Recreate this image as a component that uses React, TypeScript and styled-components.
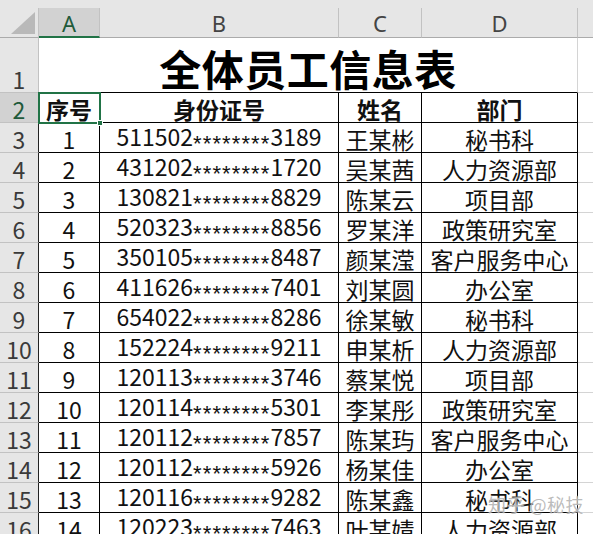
import React from "react";
import styled, { createGlobalStyle } from "styled-components";

const Global = createGlobalStyle`
  html, body { margin: 0; padding: 0; background: #fff; }
  body { font-family: "Noto Sans CJK SC", "Noto Sans", sans-serif; }
`;

const GREEN = "#217346";
const GRID = "#d4d4d4";
const HEAD_BG = "#e6e6e6";
const HEAD_SEL = "#d2d2d2";
const HEAD_LINE = "#c2c2c2";

const Viewport = styled.div`
  position: relative;
  width: 593px;
  height: 534px;
  overflow: hidden;
  background: #fff;
`;

const TopBand = styled.div`
  height: 8px;
  background: ${HEAD_BG};
`;

const Sheet = styled.div`
  display: grid;
  grid-template-columns: 39px 61px 239px 83px 156px 15px;
  grid-template-rows: 30px 55px repeat(15, 30px);
`;

const Corner = styled.div`
  background: ${HEAD_BG};
  border-right: 1px solid ${HEAD_LINE};
  border-bottom: 1px solid #ababab;
  box-sizing: border-box;
  display: flex;
  align-items: flex-end;
  justify-content: flex-end;
  padding: 0 3px 3px 0;
`;

const ColHead = styled.div<{ $sel?: boolean; $last?: boolean }>`
  box-sizing: border-box;
  background: ${(p) => (p.$sel ? HEAD_SEL : HEAD_BG)};
  border-right: ${(p) => (p.$last ? "none" : `1px solid ${HEAD_LINE}`)};
  border-bottom: ${(p) => (p.$sel ? `2px solid ${GREEN}` : "1px solid #ababab")};
  color: ${(p) => (p.$sel ? "#1f5a3a" : "#444")};
  font-family: "Noto Sans", "Liberation Sans", sans-serif;
  font-size: 22px;
  display: flex;
  align-items: center;
  justify-content: center;
  line-height: 1;
  padding-top: ${(p) => (p.$sel ? "1px" : "0")};
`;

const RowHead = styled.div<{ $sel?: boolean; $table?: boolean }>`
  box-sizing: border-box;
  background: ${(p) => (p.$sel ? HEAD_SEL : HEAD_BG)};
  border-right: 1px solid ${(p) => (p.$table ? "#222" : HEAD_LINE)};
  border-bottom: 1px solid ${HEAD_LINE};
  color: ${(p) => (p.$sel ? "#1f5a3a" : "#3a3a3a")};
  font-family: "Noto Sans CJK SC", sans-serif;
  font-size: 23px;
  display: flex;
  align-items: flex-end;
  justify-content: center;
  line-height: 1;
  padding-bottom: 1px;
`;

const Title = styled.div`
  grid-column: 2 / 6;
  box-sizing: border-box;
  border-right: 1px solid ${GRID};
  border-bottom: 1px solid #000;
  display: flex;
  align-items: flex-end;
  justify-content: center;
  font-size: 42px;
  font-weight: 700;
  line-height: 1;
  padding-bottom: 3px;
  color: #000;
  letter-spacing: 0.5px;
`;

const Cell = styled.div<{ $bold?: boolean }>`
  box-sizing: border-box;
  border-right: 1px solid #000;
  border-bottom: 1px solid #000;
  display: flex;
  align-items: center;
  justify-content: center;
  font-size: 23px;
  font-weight: ${(p) => (p.$bold ? 700 : 400)};
  line-height: 1;
  padding-top: 4px;
  color: #111;
  white-space: nowrap;
`;

const Spare = styled.div`
  box-sizing: border-box;
  border-bottom: 1px solid ${GRID};
`;

const Mask = styled.span`
  font-family: "Liberation Sans", sans-serif;
  font-size: 22px;
  letter-spacing: 1.1px;
  vertical-align: -5px;
`;

const Selection = styled.div`
  position: absolute;
  left: 38px;
  top: 92px;
  width: 63px;
  height: 32px;
  box-sizing: border-box;
  border: 2px solid ${GREEN};
  pointer-events: none;
`;

const Handle = styled.div`
  position: absolute;
  left: 97px;
  top: 120px;
  width: 6px;
  height: 6px;
  background: ${GREEN};
  border: 1px solid #fff;
  box-sizing: border-box;
`;

const Watermark = styled.div`
  position: absolute;
  left: 488px;
  top: 491px;
  font-size: 18px;
  color: rgba(170, 170, 170, 0.8);
  text-shadow: 0 0 2px #fff;
  white-space: nowrap;
  letter-spacing: 0.5px;
`;

const rows: [number, string, string, string, string][] = [
  [1, "511502", "3189", "王某彬", "秘书科"],
  [2, "431202", "1720", "吴某茜", "人力资源部"],
  [3, "130821", "8829", "陈某云", "项目部"],
  [4, "520323", "8856", "罗某洋", "政策研究室"],
  [5, "350105", "8487", "颜某滢", "客户服务中心"],
  [6, "411626", "7401", "刘某圆", "办公室"],
  [7, "654022", "8286", "徐某敏", "秘书科"],
  [8, "152224", "9211", "申某析", "人力资源部"],
  [9, "120113", "3746", "蔡某悦", "项目部"],
  [10, "120114", "5301", "李某彤", "政策研究室"],
  [11, "120112", "7857", "陈某玙", "客户服务中心"],
  [12, "120112", "5926", "杨某佳", "办公室"],
  [13, "120116", "9282", "陈某鑫", "秘书科"],
  [14, "120223", "7463", "叶某婧", "人力资源部"],
];

export default function App() {
  return (
    <Viewport>
      <Global />
      <TopBand />
      <Sheet>
        <Corner>
          <svg width="24" height="22" viewBox="0 0 24 22">
            <polygon points="24,0 24,22 0,22" fill="#b9b9b9" />
          </svg>
        </Corner>
        <ColHead $sel>A</ColHead>
        <ColHead>B</ColHead>
        <ColHead>C</ColHead>
        <ColHead>D</ColHead>
        <ColHead $last />

        <RowHead>1</RowHead>
        <Title>全体员工信息表</Title>
        <Spare />

        <RowHead $sel $table>2</RowHead>
        <Cell $bold>序号</Cell>
        <Cell $bold>身份证号</Cell>
        <Cell $bold>姓名</Cell>
        <Cell $bold>部门</Cell>
        <Spare />

        {rows.map(([n, pre, post, name, dept], i) => (
          <React.Fragment key={n}>
            <RowHead $table>{i + 3}</RowHead>
            <Cell>{n}</Cell>
            <Cell>
              <span>
                {pre}
                <Mask>********</Mask>
                {post}
              </span>
            </Cell>
            <Cell>{name}</Cell>
            <Cell>{dept}</Cell>
            <Spare />
          </React.Fragment>
        ))}
      </Sheet>
      <Selection />
      <Handle />
      <Watermark>知乎 @秘技</Watermark>
    </Viewport>
  );
}
